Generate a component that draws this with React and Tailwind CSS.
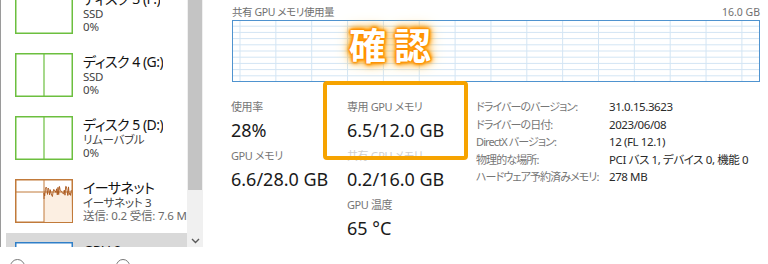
import React from "react";

const FONT = { fontFamily: '"Noto Sans", "Noto Sans CJK JP", sans-serif' };

function DiskBox({ line }) {
  return (
    <svg width="58" height="44" className="block shrink-0">
      <rect x="0.75" y="0.75" width="56.5" height="42.5" fill="white" stroke="#6cbf3f" strokeWidth="1.5" />
      {line && <line x1="29" y1="1" x2="29" y2="43" stroke="#6cbf3f" strokeWidth="1.2" />}
    </svg>
  );
}

function EthBox() {
  const pts = [];
  let seed = 11;
  const rnd = () => {
    seed = (seed * 9301 + 49297) % 233280;
    return seed / 233280;
  };
  for (let x = 29; x <= 57; x += 0.7) {
    pts.push([x, 7 + rnd() * 11]);
  }
  const d = "M29,20 L" + pts.map((p) => p[0].toFixed(1) + "," + p[1].toFixed(1)).join(" L");
  const fill = d + " L57,43 L29,43 Z";
  return (
    <svg width="58" height="44" className="block shrink-0">
      <rect x="0.75" y="0.75" width="56.5" height="42.5" fill="white" stroke="#c17a3a" strokeWidth="1.5" />
      <path d={fill} fill="#fcefe2" />
      <line x1="1" y1="13" x2="57" y2="13" stroke="#c17a3a" strokeWidth="1" />
      <line x1="29" y1="1" x2="29" y2="43" stroke="#c17a3a" strokeWidth="1" />
      <path d={d} fill="none" stroke="#a9561a" strokeWidth="0.9" />
    </svg>
  );
}

function GpuBox() {
  return (
    <svg width="58" height="44" className="block shrink-0">
      <rect x="0.75" y="0.75" width="56.5" height="42.5" fill="white" stroke="#2f7fc8" strokeWidth="1.5" />
    </svg>
  );
}

function Item({ box, title, sub, third, thirdClass = "text-[#555]", selected }) {
  return (
    <div className={"h-[63px] ml-[5px] w-[182px] pl-[9px] pt-[9px] flex items-start " + (selected ? "bg-[#d9d9d9]" : "")}>
      {box}
      <div className="ml-[10px] min-w-0 overflow-hidden whitespace-nowrap">
        <div className="pt-[1px] text-[14px] leading-[16px] text-[#111] tracking-[-0.5px]">{title}</div>
        <div className="text-[11.5px] leading-[13px] text-[#444] tracking-[-0.3px]">{sub}</div>
        <div className={"text-[11.5px] leading-[13px] tracking-[-0.2px] " + thirdClass}>{third}</div>
      </div>
    </div>
  );
}

function Grid() {
  const w = 526;
  const h = 60;
  const hl = [];
  for (let i = 1; i < 10; i++) hl.push(i * 6.2 - 1);
  const vl = [];
  for (let k = 0; k < 15; k++) vl.push(7 + 35.85 * k);
  return (
    <svg width={w} height={h} className="block">
      {hl.map((y, i) => (
        <line key={"h" + i} x1="0" x2={w} y1={y} y2={y} stroke="#d3e5f4" strokeWidth="1" />
      ))}
      {vl.map((x, i) => (
        <line key={"v" + i} x1={x} x2={x} y1="0" y2={h} stroke="#d3e5f4" strokeWidth="1" />
      ))}
    </svg>
  );
}

function Stat({ label, value, labelClass = "text-[#767676]" }) {
  return (
    <div className="mb-[3px]">
      <div className={"text-[11px] leading-[18px] tracking-[-0.4px] " + labelClass}>{label}</div>
      <div className="text-[18px] leading-[28px] text-[#1a1a1a]">{value}</div>
    </div>
  );
}

export default function App() {
  const details = [
    ["ドライバーのバージョン:", "31.0.15.3623"],
    ["ドライバーの日付:", "2023/06/08"],
    ["DirectX バージョン:", "12 (FL 12.1)"],
    ["物理的な場所:", "PCI バス 1, デバイス 0, 機能 0"],
    ["ハードウェア予約済みメモリ:", "278 MB"],
  ];
  return (
    <div className="relative w-[768px] h-[264px] overflow-hidden bg-white flex [font-feature-settings:'palt']" style={FONT}>
      {/* left column */}
      <div className="w-[203px] h-full flex flex-col shrink-0">
        <div className="h-[247px] flex border-l border-[#9a9a9a]">
          <div className="w-[186px] h-full overflow-hidden bg-white">
            <div className="-mt-[19px]">
              <Item box={<DiskBox />} title="ディスク 3 (F:)" sub="SSD" third="0%" thirdClass="text-[#444]" />
              <Item box={<DiskBox line />} title="ディスク 4 (G:)" sub="SSD" third="0%" thirdClass="text-[#444]" />
              <Item box={<DiskBox line />} title="ディスク 5 (D:)" sub="リムーバブル" third="0%" thirdClass="text-[#444]" />
              <Item box={<EthBox />} title="イーサネット" sub="イーサネット 3" third="送信: 0.2 受信: 7.6 Mbps" thirdClass="text-[#6a6a6a]" />
              <Item box={<GpuBox />} title="GPU 0" sub="NVIDIA" third="28%" selected />
            </div>
          </div>
          <div className="w-[16px] h-full bg-[#f0f0f0] flex flex-col items-center">
            <div className="w-[14px] h-[190px] bg-[#c4c4c4]" />
            <div className="mt-auto mb-[3px]">
              <svg width="9" height="6" viewBox="0 0 9 6" className="block">
                <path d="M1 1 L4.5 4.5 L8 1" fill="none" stroke="#5a5a5a" strokeWidth="1.4" />
              </svg>
            </div>
          </div>
        </div>
        <div className="flex-1 flex pl-[10px] pt-[12px] gap-[91px]">
          <div className="w-[15px] h-[15px] rounded-full border border-[#777] shrink-0" />
          <div className="w-[14px] h-[14px] rounded-full border border-[#777] shrink-0" />
        </div>
      </div>

      {/* right panel */}
      <div className="flex-1 h-full pl-[28px] pr-[8px]">
        <div className="h-[20px] pt-[4px] flex justify-between text-[10.5px] leading-[16px] text-[#707070]">
          <span className="ml-[1px] tracking-[-0.4px]">共有 GPU メモリ使用量</span>
          <span>16.0 GB</span>
        </div>
        <div className="ml-[1px] w-[528px] h-[62px] border border-[#4f93cf]">
          <Grid />
        </div>
        <div className="flex mt-[16px]">
          <div className="w-[116px]">
            <Stat label="使用率" value="28%" />
            <Stat label="GPU メモリ" value="6.6/28.0 GB" />
          </div>
          <div className="w-[129px]">
            <Stat label="専用 GPU メモリ" value="6.5/12.0 GB" />
            <Stat label="共有 GPU メモリ" value="0.2/16.0 GB" labelClass="text-[#cfcfcf]" />
            <Stat label="GPU 温度" value="65 °C" />
          </div>
          <div className="flex-1 leading-[17.5px]">
            {details.map(([k, v]) => (
              <div key={k} className="flex whitespace-nowrap">
                <div className="w-[133px] text-[11px] tracking-[-0.9px] text-[#767676]">{k}</div>
                <div className="text-[11.5px] tracking-[-0.4px] text-[#2a2a2a]">{v}</div>
              </div>
            ))}
          </div>
        </div>
      </div>

      {/* annotations */}
      <div className="absolute left-[323px] top-[81px] w-[145px] h-[79px] border-[4px] border-[#f6a300] rounded-[4px]" />
      <div
        className="absolute left-[349px] top-[26px] text-[37px] leading-[36px] font-bold text-white tracking-[8px] [text-shadow:0_0_1px_#ff9000,0_0_1px_#ff9000,0_0_2px_#ff9000,0_0_2px_#ff9000,0_0_3px_#ff9200,0_0_3px_#ff9200,0_0_4px_#ff9500,0_0_5px_#ff9800,0_0_7px_#ffa000,0_0_10px_#ffad20,0_0_15px_#ffc050]"
        style={{ fontFamily: '"Noto Sans CJK JP", sans-serif' }}
      >
        確認
      </div>
    </div>
  );
}
